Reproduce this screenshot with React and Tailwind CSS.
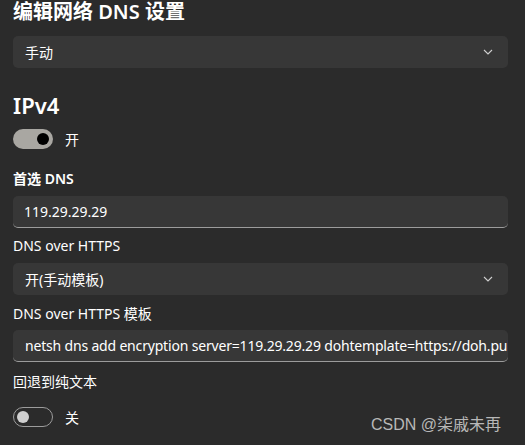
import React from "react";

const font = { fontFamily: '"Noto Sans", "Noto Sans CJK SC", sans-serif' };

function Chevron() {
  return (
    <svg width="10" height="6" viewBox="0 0 10 6" className="mr-[15px]">
      <path d="M1 1 L5 5 L9 1" fill="none" stroke="#cfcfcf" strokeWidth="1.1" />
    </svg>
  );
}

function Select({ label }) {
  return (
    <div className="h-[32px] w-[495px] rounded-[5px] bg-[#373737] flex items-center justify-between pl-[12px] text-[14px] text-white">
      <span>{label}</span>
      <Chevron />
    </div>
  );
}

function Input({ value, extra = "pl-[11px]" }) {
  return (
    <div className={`h-[32px] w-[495px] rounded-[5px] bg-[#373737] border-b border-[#9c9c9c] flex items-center ${extra} text-[14px] text-white overflow-hidden whitespace-nowrap`}>
      {value}
    </div>
  );
}

export default function App() {
  return (
    <div className="w-[525px] h-[445px] bg-[#2b2b2b] relative overflow-hidden" style={font}>
      <div className="flex flex-col pl-[13px]">
        <div className="text-[20px] leading-[24px] font-semibold text-white">编辑网络 DNS 设置</div>
        <div className="mt-[12px]"><Select label="手动" /></div>
        <div className="mt-[23px] text-[22px] leading-[28px] font-semibold text-white">IPv4</div>
        <div className="mt-[10px] flex items-center h-[20px]">
          <div className="w-[40px] h-[20px] rounded-full bg-[#a9a7a2] flex items-center justify-end pr-[4px]">
            <div className="w-[12px] h-[12px] rounded-full bg-black"></div>
          </div>
          <span className="ml-[12px] text-[14px] text-white">开</span>
        </div>
        <div className="mt-[20px] text-[14px] leading-[20px] font-semibold text-white">首选 DNS</div>
        <div className="mt-[7px]"><Input value="119.29.29.29" /></div>
        <div className="mt-[8px] text-[14px] leading-[20px] text-white">DNS over HTTPS</div>
        <div className="mt-[7px]"><Select label="开(手动模板)" /></div>
        <div className="mt-[9px] text-[14px] leading-[20px] text-white">DNS over HTTPS 模板</div>
        <div className="mt-[6px]"><Input value="netsh dns add encryption server=119.29.29.29 dohtemplate=https://doh.pub/dns-query" extra="pl-[12px] tracking-[-0.18px]" /></div>
        <div className="mt-[10px] text-[14px] leading-[20px] text-white">回退到纯文本</div>
        <div className="mt-[15px] flex items-center h-[20px]">
          <div className="w-[40px] h-[20px] rounded-full border border-[#9c9c9c] flex items-center pl-[3px]">
            <div className="w-[12px] h-[12px] rounded-full bg-[#d0d0d0]"></div>
          </div>
          <span className="ml-[12px] text-[14px] text-white">关</span>
        </div>
      </div>
      <div className="absolute left-[371px] top-[413px] text-[16px] text-[#b8b8b8]" style={{ fontFamily: '"Liberation Sans", "Noto Sans CJK SC", sans-serif' }}>CSDN @柒戚未再</div>
    </div>
  );
}
